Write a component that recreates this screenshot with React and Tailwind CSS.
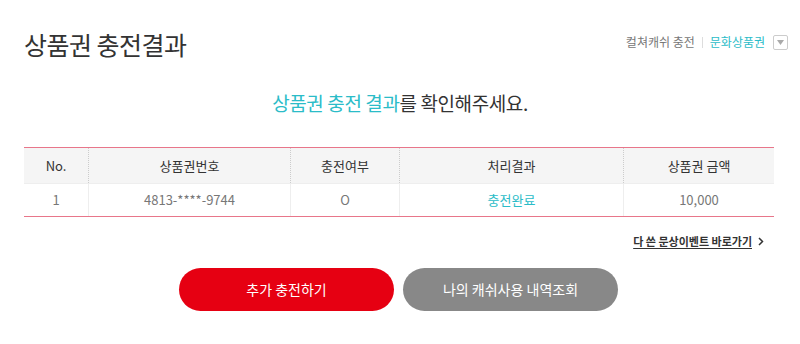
import React from 'react';

const font = { fontFamily: '"Noto Sans CJK KR", "Noto Sans", sans-serif' };

const cols = [
  { w: 'w-[65px]', head: 'No.', body: '1' },
  { w: 'w-[202px]', head: '상품권번호', body: '4813-****-9744' },
  { w: 'w-[109px]', head: '충전여부', body: 'O' },
  { w: 'w-[224px]', head: '처리결과', body: '충전완료', teal: true },
  { w: 'flex-1', head: '상품권 금액', body: '10,000' },
];

const App = () => {
  return (
    <div className="w-[800px] h-[344px] bg-white text-[#333]" style={font}>
      <div className="flex items-start justify-between pl-[24px] pr-[12px] pt-[27px]">
        <h1 className="text-[25px] leading-[34px] font-normal text-[#333] tracking-[-0.5px]">상품권 충전결과</h1>
        <div className="flex items-center mt-[7px] text-[12px] leading-[16px]">
          <span className="text-[#777]">컬쳐캐쉬 충전</span>
          <span className="mx-[7px] h-[11px] w-px bg-[#ddd]" />
          <span className="text-[#2bbcc8]">문화상품권</span>
          <span className="ml-[8px] w-[15px] h-[15px] border border-[#ccc] rounded-[2px] flex items-center justify-center">
            <svg width="7" height="5" viewBox="0 0 7 5"><path d="M0 0h7L3.5 5z" fill="#aaa" /></svg>
          </span>
        </div>
      </div>

      <p className="mt-[29px] text-center text-[19px] leading-[26px] text-[#333] tracking-[-0.4px]">
        <span className="text-[#2bbcc8]">상품권 충전 결과</span>를 확인해주세요.
      </p>

      <div className="mx-[24px] w-[750px] mt-[31px] border-t border-b border-[#e8768a]">
        <div className="flex h-[36px] bg-[#f5f5f5] text-[13px] text-[#333] border-b border-[#eee]">
          {cols.map((c, i) => (
            <div
              key={c.head}
              className={`${c.w} flex items-center justify-center ${i < cols.length - 1 ? 'border-r border-dotted border-[#ccc]' : ''}`}
            >
              {c.head}
            </div>
          ))}
        </div>
        <div className="flex h-[32px] text-[13px] text-[#777]">
          {cols.map((c, i) => (
            <div
              key={c.head}
              className={`${c.w} flex items-center justify-center ${i < cols.length - 1 ? 'border-r border-[#eee]' : ''} ${c.teal ? 'text-[#2bbcc8]' : ''}`}
            >
              {c.body}
            </div>
          ))}
        </div>
      </div>

      <div className="flex justify-end pr-[36px] mt-[16px]">
        <a className="text-[11px] leading-[16px] font-bold text-[#333] underline underline-offset-2 flex items-center gap-[6px]">
          다 쓴 문상이벤트 바로가기
          <svg width="6" height="9" viewBox="0 0 6 9"><path d="M1 1l3.5 3.5L1 8" stroke="#333" strokeWidth="1.5" fill="none" /></svg>
        </a>
      </div>

      <div className="flex pl-[179px] gap-[9px] mt-[19px]">
        <button className="w-[215px] h-[43px] rounded-full bg-[#e60012] text-white text-[14px]">추가 충전하기</button>
        <button className="w-[215px] h-[43px] rounded-full bg-[#888] text-white text-[14px]">나의 캐쉬사용 내역조회</button>
      </div>
    </div>
  );
};

export default App;
